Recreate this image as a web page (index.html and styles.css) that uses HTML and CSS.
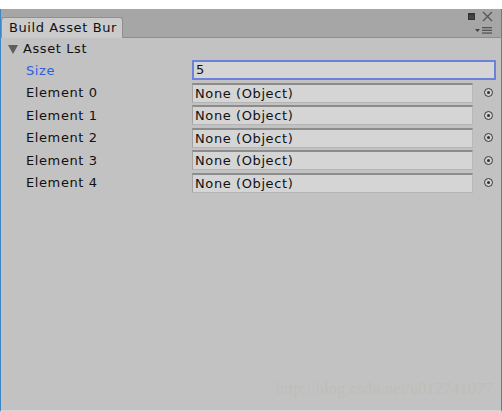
FILE: index.html
```html
<!DOCTYPE html>
<html>
<head>
<meta charset="utf-8">
<link rel="stylesheet" href="styles.css">
</head>
<body>
<div class="window">
  <div class="topstrip"></div>
  <div class="tabbar">
    <div class="tab">Build Asset Bur</div>
    <div class="tabtools">
      <div class="toprow">
        <span class="maxbox"></span>
        <svg class="close" width="11" height="11" viewBox="0 0 11 11"><path d="M1 1 L10 10 M10 1 L1 10" stroke="#555" stroke-width="1.3" fill="none"/></svg>
      </div>
      <svg class="menu" width="18" height="7" viewBox="0 0 18 7"><path d="M0 2 L5 2 L2.5 5 Z" fill="#444"/><rect x="7" y="0" width="10" height="1.3" fill="#555"/><rect x="7" y="2.7" width="10" height="1.3" fill="#555"/><rect x="7" y="5.4" width="10" height="1.3" fill="#555"/></svg>
    </div>
  </div>
  <div class="content">
    <div class="header"><span class="tri"></span>Asset Lst</div>
    <div class="row first">
      <span class="label size">Size</span>
      <div class="field active">5</div>
    </div>
    <div class="row">
      <span class="label">Element 0</span>
      <div class="field obj">None (Object)</div>
      <span class="pick"></span>
    </div>
    <div class="row">
      <span class="label">Element 1</span>
      <div class="field obj">None (Object)</div>
      <span class="pick"></span>
    </div>
    <div class="row">
      <span class="label">Element 2</span>
      <div class="field obj">None (Object)</div>
      <span class="pick"></span>
    </div>
    <div class="row">
      <span class="label">Element 3</span>
      <div class="field obj">None (Object)</div>
      <span class="pick"></span>
    </div>
    <div class="row">
      <span class="label">Element 4</span>
      <div class="field obj">None (Object)</div>
      <span class="pick"></span>
    </div>
    <div class="spacer"></div>
    <div class="watermark">http://blog.csdn.net/u012741077</div>
  </div>
</div>
</body>
</html>
```

FILE: styles.css
```css
html, body {
  margin: 0;
  padding: 0;
}
body {
  width: 502px;
  height: 412px;
  overflow: hidden;
  background: #c2c2c2;
  font-family: "DejaVu Sans", Verdana, sans-serif;
  font-size: 13px;
  letter-spacing: 0.6px;
  color: #111;
}
.window {
  width: 502px;
  height: 412px;
  display: flex;
  flex-direction: column;
  box-sizing: border-box;
}
.topstrip {
  height: 9px;
  background: #fff;
  flex: none;
}
.tabbar {
  flex: none;
  background: #a6a6a6;
  border-left: 1px solid #3d86c6;
  border-right: 1px solid #3d86c6;
  border-bottom: 1px solid #8e8e8e;
  display: flex;
  align-items: flex-end;
  justify-content: space-between;
  box-sizing: border-box;
  height: 29px;
}
.tab {
  height: 21px;
  width: 122px;
  box-sizing: border-box;
  background: #cbcbcb;
  border: 1px solid #8f8f8f;
  border-bottom: none;
  border-radius: 3px 3px 0 0;
  padding-left: 7px;
  line-height: 20px;
  color: #111;
  white-space: nowrap;
  margin-bottom: -1px;
}
.tabtools {
  align-self: stretch;
  display: flex;
  flex-direction: column;
  align-items: flex-end;
  padding: 2px 8px 0 0;
}
.toprow {
  display: flex;
  align-items: center;
  gap: 7px;
}
.maxbox {
  width: 5px;
  height: 4px;
  border: 1px solid #333;
  border-top-width: 2px;
  background: #444;
}
.close {
  display: block;
}
.menu {
  display: block;
  margin-top: 5px;
}
.content {
  flex: 1;
  display: flex;
  flex-direction: column;
  border-left: 1px solid #3d86c6;
  border-right: 1px solid #3d86c6;
  border-bottom: 2px solid #d4d4d4;
  padding-top: 1px;
  position: relative;
}
.header {
  height: 19px;
  display: flex;
  align-items: center;
  padding-left: 7px;
}
.tri {
  width: 0;
  height: 0;
  border-left: 5px solid transparent;
  border-right: 5px solid transparent;
  border-top: 9px solid #5e5e5e;
  margin-right: 5px;
  margin-top: 1px;
}
.row {
  height: 22.5px;
  display: flex;
  align-items: center;
  padding-left: 25px;
}
.row.first {
  margin-top: 1px;
}
.label {
  width: 166px;
  flex: none;
  white-space: nowrap;
}
.label.size {
  color: #2f5ee0;
}
.field {
  height: 20px;
  box-sizing: border-box;
  background: #d5d5d5;
  padding-left: 3px;
  white-space: nowrap;
}
.field.active {
  width: 304px;
  border: 2px solid #6a82db;
  line-height: 16px;
  padding-left: 2px;
}
.field.obj {
  width: 281px;
  border-top: 2px solid #8c8c8c;
  border-left: 1px solid #a3a3a3;
  border-right: 1px solid #b8b8b8;
  border-bottom: 1px solid #b5b5b5;
  line-height: 17px;
  padding-left: 2px;
}
.pick {
  margin-left: 11px;
  border: 1px solid #3a3a3a;
  border-radius: 50%;
  box-sizing: border-box;
  width: 9px;
  height: 9px;
  position: relative;
  background: #d0d0d0;
}
.pick::after {
  content: "";
  position: absolute;
  left: 2px;
  top: 2px;
  width: 3px;
  height: 3px;
  border-radius: 50%;
  background: #333;
}
.spacer {
  flex: 1;
}
.watermark {
  position: absolute;
  right: 8px;
  bottom: 12px;
  font-family: "Liberation Serif", serif;
  font-size: 16px;
  color: #bebeb8;
  letter-spacing: 0.3px;
}
```
